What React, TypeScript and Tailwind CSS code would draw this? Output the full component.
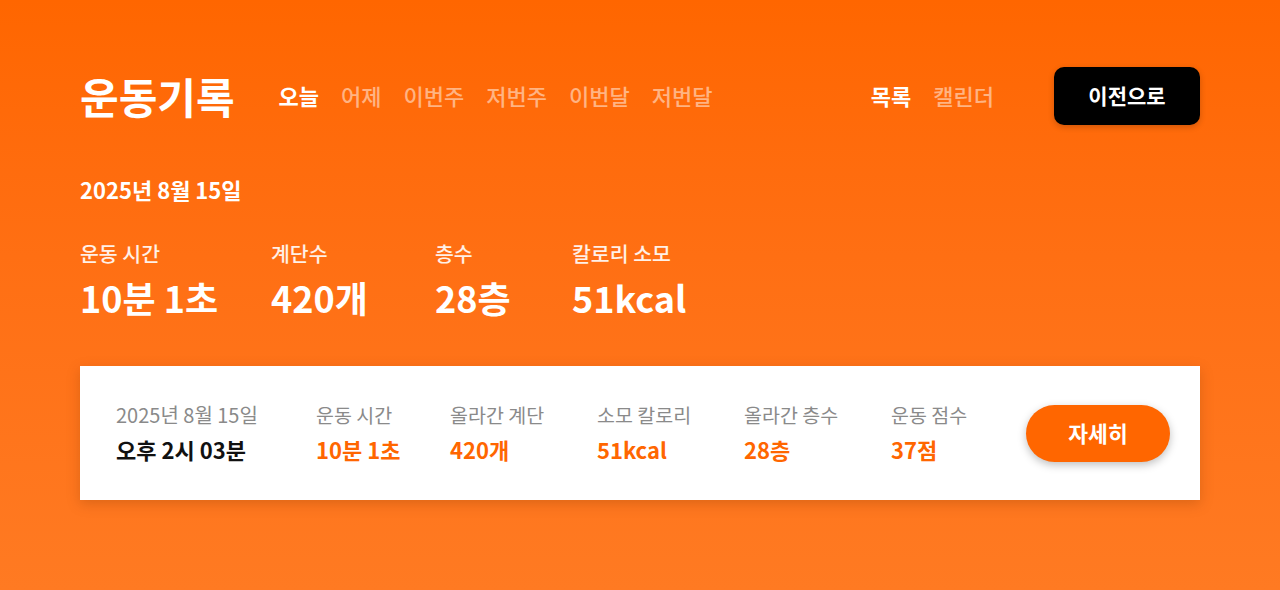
import React from "react";

const font = { fontFamily: '"Noto Sans CJK KR", "Noto Sans", sans-serif' };

export default function App() {
  const nav = ["오늘", "어제", "이번주", "저번주", "이번달", "저번달"];
  const stats = [
    { label: "운동 시간", value: "10분 1초", w: "w-[191px]" },
    { label: "계단수", value: "420개", w: "w-[164px]" },
    { label: "층수", value: "28층", w: "w-[137px]" },
    { label: "칼로리 소모", value: "51kcal", w: "w-[150px]" },
  ];
  const items = [
    { label: "운동 시간", value: "10분 1초", w: "w-[134px]" },
    { label: "올라간 계단", value: "420개", w: "w-[147px]" },
    { label: "소모 칼로리", value: "51kcal", w: "w-[147px]" },
    { label: "올라간 층수", value: "28층", w: "w-[147px]" },
    { label: "운동 점수", value: "37점", w: "w-[135px]" },
  ];
  return (
    <div
      style={font}
      className="w-[1280px] h-[590px] bg-gradient-to-b from-[#ff6600] to-[#ff7a22] px-[80px] pt-[67px] text-white"
    >
      <div className="flex items-center h-[58px]">
        <div className="text-[42px] font-bold leading-none mr-[44px]">운동기록</div>
        <div className="flex items-center gap-[22px] text-[22px] leading-none -mt-[2px]">
          {nav.map((n, i) => (
            <span key={n} className={i === 0 ? "font-bold text-white" : "font-medium text-white/50"}>
              {n}
            </span>
          ))}
        </div>
        <div className="flex-1" />
        <div className="flex items-center gap-[22px] text-[22px] leading-none mr-[60px] -mt-[2px]">
          <span className="font-bold">목록</span>
          <span className="font-medium text-white/50">캘린더</span>
        </div>
        <button className="w-[146px] h-[58px] rounded-[10px] bg-black text-white text-[21px] font-bold shadow-[0_2px_6px_rgba(0,0,0,0.2)]">
          이전으로
        </button>
      </div>

      <div className="mt-[49px] text-[22px] font-semibold leading-[30px]">2025년 8월 15일</div>

      <div className="flex mt-[35px]">
        {stats.map((s) => (
          <div key={s.label} className={`${s.w} flex flex-col`}>
            <div className="text-[20.5px] font-medium leading-[28px] text-white/90">{s.label}</div>
            <div className="text-[36px] font-bold leading-[44px] mt-[8px]">{s.value}</div>
          </div>
        ))}
      </div>

      <div className="mt-[47px] h-[134px] bg-white shadow-[0_4px_12px_rgba(120,50,0,0.25)] flex items-center pl-[36px] pr-[30px]">
        <div className="w-[200px] flex flex-col">
          <div className="text-[20px] leading-[26px] text-[#8a8a8a]">2025년 8월 15일</div>
          <div className="text-[22px] font-bold leading-[30px] mt-[6px] text-[#111]">오후 2시 03분</div>
        </div>
        {items.map((s) => (
          <div key={s.label} className={`${s.w} flex flex-col`}>
            <div className="text-[19.5px] leading-[26px] text-[#8a8a8a]">{s.label}</div>
            <div className="text-[22px] font-bold leading-[30px] mt-[6px] text-[#ff6600]">{s.value}</div>
          </div>
        ))}
        <div className="flex-1" />
        <button className="w-[144px] h-[57px] rounded-full bg-[#ff6600] text-white text-[21.5px] font-bold shadow-[0_3px_8px_rgba(0,0,0,0.25)]">
          자세히
        </button>
      </div>
    </div>
  );
}
